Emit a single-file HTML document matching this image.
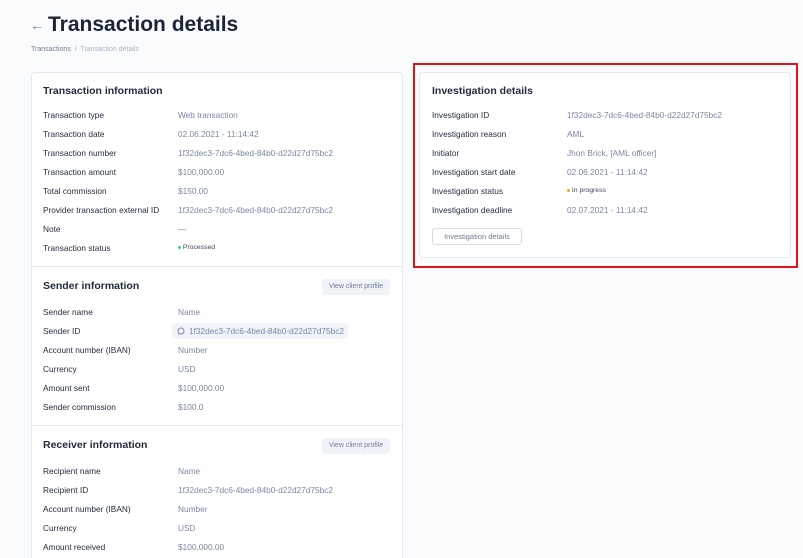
<!DOCTYPE html><html><head><style>
*{margin:0;padding:0;box-sizing:border-box}
html{overflow:hidden;height:558px}
body{width:803px;height:558px;background:#fafbfc;font-family:"Liberation Sans",sans-serif;position:relative;overflow:hidden;color:#1f2a3c}
.a{position:absolute;white-space:nowrap}
.l{font-size:8.3px;line-height:10px;color:#1f2a3c}
.v{font-size:8.3px;line-height:10px;color:#7a87a6}
.t{font-size:10.5px;line-height:14px;font-weight:bold;color:#1f2a3c}
.card{position:absolute;background:#fff;border:1px solid #e3e9f1;border-radius:4px}
.hr{position:absolute;height:1px;background:#e3e9f1}
.btn{position:absolute;background:#f0f4f9;border-radius:3px;font-size:7px;color:#6f7c95;text-align:center;line-height:16px}
</style></head><body>
<div class="a" style="left:30px;top:17px;font-size:14px;color:#7a87a6">←</div>
<div class="a" style="left:48px;top:12px;font-size:21px;font-weight:bold;color:#1b2538;line-height:26px">Transaction details</div>
<div class="a" style="left:31px;top:46px;font-size:7px;color:#6f7c95">Transactions <span style="color:#aab4c6">&nbsp;/&nbsp; Transaction details</span></div>

<div class="card" style="left:31px;top:72px;width:372px;height:490px"></div>
<div class="hr" style="left:32px;top:266px;width:370px"></div>
<div class="hr" style="left:32px;top:425px;width:370px"></div>

<div class="a t" style="left:43px;top:84px">Transaction information</div>
<div class="a l" style="left:43px;top:110px">Transaction type</div><div class="a v" style="left:178px;top:110px">Web transaction</div>
<div class="a l" style="left:43px;top:129px">Transaction date</div><div class="a v" style="left:178px;top:129px">02.06.2021 - 11:14:42</div>
<div class="a l" style="left:43px;top:148px">Transaction number</div><div class="a v" style="left:178px;top:148px">1f32dec3-7dc6-4bed-84b0-d22d27d75bc2</div>
<div class="a l" style="left:43px;top:167px">Transaction amount</div><div class="a v" style="left:178px;top:167px">$100,000.00</div>
<div class="a l" style="left:43px;top:186px">Total commission</div><div class="a v" style="left:178px;top:186px">$150.00</div>
<div class="a l" style="left:43px;top:205px">Provider transaction external ID</div><div class="a v" style="left:178px;top:205px">1f32dec3-7dc6-4bed-84b0-d22d27d75bc2</div>
<div class="a l" style="left:43px;top:224px">Note</div><div class="a v" style="left:178px;top:224px">—</div>
<div class="a l" style="left:43px;top:243px">Transaction status</div><div class="a" style="left:178px;top:244px;font-size:6.8px;color:#3a4558"><span style="display:inline-block;width:3px;height:3px;border-radius:50%;background:#2ecf9a;vertical-align:middle"></span> Processed</div>

<div class="a t" style="left:43px;top:279px">Sender information</div>
<div class="btn" style="left:322px;top:279px;width:68px">View client profile</div>
<div class="a l" style="left:43px;top:307px">Sender name</div><div class="a v" style="left:178px;top:307px">Name</div>
<div class="a l" style="left:43px;top:326px">Sender ID</div>
<div class="a" style="left:172px;top:323px;width:176px;height:16px;background:#f0f4f9;border-radius:3px"></div>
<svg class="a" style="left:177px;top:327px" width="8" height="8" viewBox="0 0 8 8"><circle cx="4" cy="4" r="3" fill="none" stroke="#7a87a6" stroke-width="1"/><path d="M2 6.5L1.5 7.5" stroke="#7a87a6"/></svg>
<div class="a v" style="left:189px;top:326px">1f32dec3-7dc6-4bed-84b0-d22d27d75bc2</div>
<div class="a l" style="left:43px;top:345px">Account number (IBAN)</div><div class="a v" style="left:178px;top:345px">Number</div>
<div class="a l" style="left:43px;top:364px">Currency</div><div class="a v" style="left:178px;top:364px">USD</div>
<div class="a l" style="left:43px;top:383px">Amount sent</div><div class="a v" style="left:178px;top:383px">$100,000.00</div>
<div class="a l" style="left:43px;top:402px">Sender commission</div><div class="a v" style="left:178px;top:402px">$100.0</div>

<div class="a t" style="left:43px;top:438px">Receiver information</div>
<div class="btn" style="left:322px;top:438px;width:68px">View client profile</div>
<div class="a l" style="left:43px;top:466px">Recipient name</div><div class="a v" style="left:178px;top:466px">Name</div>
<div class="a l" style="left:43px;top:485px">Recipient ID</div><div class="a v" style="left:178px;top:485px">1f32dec3-7dc6-4bed-84b0-d22d27d75bc2</div>
<div class="a l" style="left:43px;top:504px">Account number (IBAN)</div><div class="a v" style="left:178px;top:504px">Number</div>
<div class="a l" style="left:43px;top:523px">Currency</div><div class="a v" style="left:178px;top:523px">USD</div>
<div class="a l" style="left:43px;top:542px">Amount received</div><div class="a v" style="left:178px;top:542px">$100,000.00</div>

<div class="a" style="left:413px;top:63px;width:385px;height:205px;border:2px solid #e0141b"></div>
<div class="card" style="left:419px;top:72px;width:372px;height:186px"></div>
<div class="a t" style="left:432px;top:84px">Investigation details</div>
<div class="a l" style="left:432px;top:110px">Investigation ID</div><div class="a v" style="left:567px;top:110px">1f32dec3-7dc6-4bed-84b0-d22d27d75bc2</div>
<div class="a l" style="left:432px;top:129px">Investigation reason</div><div class="a v" style="left:567px;top:129px">AML</div>
<div class="a l" style="left:432px;top:148px">Initiator</div><div class="a v" style="left:567px;top:148px">Jhon Brick, [AML officer]</div>
<div class="a l" style="left:432px;top:167px">Investigation start date</div><div class="a v" style="left:567px;top:167px">02.06.2021 - 11:14:42</div>
<div class="a l" style="left:432px;top:186px">Investigation status</div><div class="a" style="left:567px;top:187px;font-size:6.8px;color:#3a4558"><span style="display:inline-block;width:3px;height:3px;border-radius:50%;background:#f5a623;vertical-align:middle"></span> In progress</div>
<div class="a l" style="left:432px;top:205px">Investigation deadline</div><div class="a v" style="left:567px;top:205px">02.07.2021 - 11:14:42</div>
<div class="a" style="left:432px;top:228px;width:90px;height:17px;border:1px solid #d5dde8;border-radius:3px;font-size:7.5px;color:#6f7c95;text-align:center;line-height:15px">Investigation details</div>
</body></html>
